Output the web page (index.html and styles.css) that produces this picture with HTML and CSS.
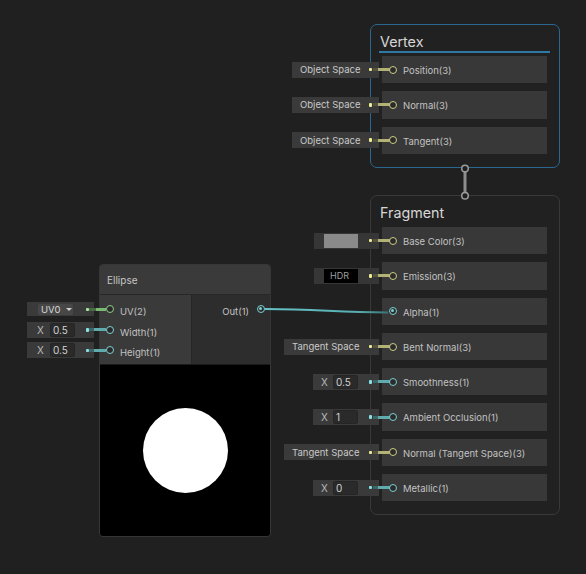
FILE: index.html
```html
<!DOCTYPE html>
<html>
<head>
<meta charset="utf-8">
<link rel="stylesheet" href="styles.css">
</head>
<body>
<div class="canvas">

  <section class="stack vertex">
    <div class="stack-title">Vertex</div>
    <div class="stack-bar"></div>
    <div class="slots">
      <div class="slot v3">
        <div class="field f-space"><span>Object Space</span><i class="dot"></i></div>
        <i class="wire"></i><i class="port"></i>
        <div class="slot-label">Position(3)</div>
      </div>
      <div class="slot v3">
        <div class="field f-space"><span>Object Space</span><i class="dot"></i></div>
        <i class="wire"></i><i class="port"></i>
        <div class="slot-label">Normal(3)</div>
      </div>
      <div class="slot v3">
        <div class="field f-space"><span>Object Space</span><i class="dot"></i></div>
        <i class="wire"></i><i class="port"></i>
        <div class="slot-label">Tangent(3)</div>
      </div>
    </div>
  </section>

  <section class="stack fragment">
    <div class="stack-title">Fragment</div>
    <div class="stack-bar"></div>
    <div class="slots">
      <div class="slot v3">
        <div class="field f-color"><span class="swatch grey"></span><i class="dot"></i></div>
        <i class="wire"></i><i class="port"></i>
        <div class="slot-label">Base Color(3)</div>
      </div>
      <div class="slot v3">
        <div class="field f-color"><span class="swatch hdr">HDR</span><i class="dot"></i></div>
        <i class="wire"></i><i class="port"></i>
        <div class="slot-label">Emission(3)</div>
      </div>
      <div class="slot v1">
        <i class="port connected"></i>
        <div class="slot-label">Alpha(1)</div>
      </div>
      <div class="slot v3">
        <div class="field f-tspace"><span>Tangent Space</span><i class="dot"></i></div>
        <i class="wire"></i><i class="port"></i>
        <div class="slot-label">Bent Normal(3)</div>
      </div>
      <div class="slot v1">
        <div class="field f-num"><span class="axis">X</span><span class="num">0.5</span><i class="dot"></i></div>
        <i class="wire"></i><i class="port"></i>
        <div class="slot-label">Smoothness(1)</div>
      </div>
      <div class="slot v1">
        <div class="field f-num"><span class="axis">X</span><span class="num">1</span><i class="dot"></i></div>
        <i class="wire"></i><i class="port"></i>
        <div class="slot-label">Ambient Occlusion(1)</div>
      </div>
      <div class="slot v3">
        <div class="field f-tspace"><span>Tangent Space</span><i class="dot"></i></div>
        <i class="wire"></i><i class="port"></i>
        <div class="slot-label">Normal (Tangent Space)(3)</div>
      </div>
      <div class="slot v1">
        <div class="field f-num"><span class="axis">X</span><span class="num">0</span><i class="dot"></i></div>
        <i class="wire"></i><i class="port"></i>
        <div class="slot-label">Metallic(1)</div>
      </div>
    </div>
  </section>

  <section class="node">
    <div class="node-title">Ellipse</div>
    <div class="node-body">
      <div class="node-inputs">
        <div class="nport v2">
          <div class="nfield f-uv"><span class="dropdown">UV0<b class="caret"></b></span><i class="dot"></i></div>
          <i class="wire"></i><i class="port"></i>
          <span class="nlabel">UV(2)</span>
        </div>
        <div class="nport v1">
          <div class="nfield f-nnum"><span class="axis">X</span><span class="num">0.5</span><i class="dot"></i></div>
          <i class="wire"></i><i class="port"></i>
          <span class="nlabel">Width(1)</span>
        </div>
        <div class="nport v1">
          <div class="nfield f-nnum"><span class="axis">X</span><span class="num">0.5</span><i class="dot"></i></div>
          <i class="wire"></i><i class="port"></i>
          <span class="nlabel">Height(1)</span>
        </div>
      </div>
      <div class="node-outputs">
        <div class="oport v1">
          <span class="nlabel">Out(1)</span>
          <i class="port connected"></i>
        </div>
      </div>
    </div>
    <div class="preview"><div class="disc"></div></div>
  </section>

  <svg class="edges" width="586" height="574" viewBox="0 0 586 574">
    <defs>
      <linearGradient id="edgeGrad" x1="0" y1="0" x2="1" y2="0">
        <stop offset="0" stop-color="#66c3c7"/>
        <stop offset="0.75" stop-color="#57aeb2"/>
        <stop offset="1" stop-color="#3c7376"/>
      </linearGradient>
    </defs>
    <path d="M265 309 C 320 309, 335 312.5, 388 312.5" fill="none" stroke="url(#edgeGrad)" stroke-width="2"/>
    <line x1="465" y1="172" x2="465" y2="192" stroke="#8d8d8d" stroke-width="3"/>
    <circle cx="465" cy="168.5" r="3.3" fill="#202020" stroke="#9c9c9c" stroke-width="1.5"/>
    <circle cx="465" cy="195.8" r="3.3" fill="#202020" stroke="#9c9c9c" stroke-width="1.5"/>
  </svg>
</div>
</body>
</html>
```
FILE: styles.css
```css
* { box-sizing: border-box; }
html, body { margin: 0; padding: 0; }
body {
  width: 586px;
  height: 574px;
  overflow: hidden;
  background: #202020;
  font-family: Inter, "Noto Sans", "Liberation Sans", sans-serif;
}
i { display: block; font-style: normal; }

.canvas { position: relative; width: 586px; height: 574px; }
.edges { position: absolute; left: 0; top: 0; z-index: 5; pointer-events: none; }

/* ---- master stacks ---- */
.stack {
  position: absolute;
  left: 370px;
  width: 190px;
  border: 1px solid #393939;
  border-radius: 7px;
  background: #212121;
  padding-top: 8px;
  display: flex;
  flex-direction: column;
}
.vertex { top: 24px; height: 144px; border-color: #2a6890; }
.fragment { top: 195px; height: 320px; }

.stack-title {
  font-size: 14.3px;
  line-height: 18px;
  color: #d6d6d6;
  margin-left: 9px;
}
.stack-bar { height: 2px; width: 171px; margin-left: 8px; }
.vertex .stack-bar { background: #2e79a6; }

.slots {
  display: flex;
  flex-direction: column;
  gap: 8px;
  margin: 3px 0 0 11px;
  width: 165px;
}
.slot { position: relative; height: 27.3px; background: #383838; flex: none; }
.slot-label {
  font-size: 9.5px;
  line-height: 24px;
  padding: 3px 0 0 21px;
  color: #c2c2c2;
  white-space: nowrap;
}

/* ---- ports / wires ---- */
.port {
  position: absolute;
  left: 6.5px;
  top: 50%;
  width: 8px;
  height: 8px;
  margin-top: -4px;
  border-radius: 50%;
  border: 1.5px solid;
  background: #2b2b2b;
  z-index: 3;
}
.port.connected::after {
  content: "";
  position: absolute;
  left: 1px; top: 1px;
  width: 3px; height: 3px;
  border-radius: 50%;
  background: currentColor;
}
.wire {
  position: absolute;
  left: -9px;
  width: 17px;
  top: 50%;
  height: 3px;
  margin-top: -1.5px;
  z-index: 2;
}
.dot { width: 3.5px; height: 3.5px; border-radius: 1px; margin-left: auto; margin-right: 7px; flex: none; }

.v3 .port { border-color: #cdcd88; color: #cdcd88; }
.v3 .dot { background: #ecec9a; }
.v3 .wire { background: linear-gradient(to right, #55553f 0 5px, #b2b276 5px); }
.v1 .port { border-color: #7ccfd3; color: #7ccfd3; }
.v1 .dot { background: #8ae0e4; }
.v1 .wire { background: linear-gradient(to right, #3d6667 0 5px, #5fabae 5px); }
.v2 .port { border-color: #8dcb86; color: #8dcb86; }
.v2 .dot { background: #a2ea99; }
.v2 .wire { background: linear-gradient(to right, #4a6a47 0 7px, #7ab974 7px); }

/* ---- inline input fields ---- */
.field {
  position: absolute;
  right: calc(100% + 3px);
  top: 50%;
  height: 16px;
  margin-top: -8px;
  background: #3a3a3a;
  display: flex;
  align-items: center;
  padding-left: 8px;
  font-size: 9.5px;
  color: #c9c9c9;
  white-space: nowrap;
  z-index: 1;
}
.f-space { width: 87px; }
.f-tspace { width: 95px; }
.f-color { width: 65px; padding-left: 10px; background: #363636; }
.f-num { width: 66px; font-size: 10px; }

.swatch {
  width: 34px;
  height: 14px;
  flex: none;
}
.swatch.grey { background: #8a8a8a; }
.swatch.hdr {
  background: #000;
  color: #9e9e9e;
  font-size: 9px;
  line-height: 14px;
  padding-left: 6px;
}
.axis { color: #b9b9b9; width: 11px; flex: none; }
.num {
  width: 25px;
  height: 14px;
  margin-left: 1px;
  flex: none;
  background: #2a2a2a;
  border: 1px solid #252525;
  border-radius: 2px;
  padding-left: 2px;
  line-height: 12px;
  color: #d2d2d2;
}

/* ---- Ellipse node ---- */
.node {
  position: absolute;
  left: 99px;
  top: 264px;
  width: 172px;
  height: 273px;
  border: 1px solid #363636;
  border-radius: 4px;
  background: #2e2e2e;
  display: flex;
  flex-direction: column;
}
.node-title {
  height: 30px;
  flex: none;
  background: #3a3a3a;
  border-radius: 3px 3px 0 0;
  border-bottom: 1px solid #272727;
  padding-left: 7px;
  font-size: 10px;
  line-height: 30px;
  color: #c6c6c6;
}
.node-body { display: flex; height: 69px; flex: none; }
.node-inputs { width: 91px; background: #3a3a3a; padding-top: 4px; }
.node-outputs { flex: 1; background: #2d2d2d; padding-top: 4px; border-left: 1px solid #262626; }
.nport { position: relative; height: 20.5px; }
.oport { position: relative; height: 20.5px; text-align: right; padding-right: 21px; }
.nlabel {
  font-size: 9.5px;
  line-height: 21px;
  color: #c2c2c2;
  padding-left: 20px;
  white-space: nowrap;
}
.oport .nlabel { padding-left: 0; }
.nport .port { left: 5.5px; }
.oport .port { left: auto; right: 5.5px; }
.nport .wire { left: -11px; width: 17px; }

.nfield {
  position: absolute;
  right: calc(100% + 6px);
  top: 50%;
  height: 16px;
  margin-top: -8px;
  width: 67px;
  background: #3a3a3a;
  display: flex;
  align-items: center;
  padding-left: 10px;
  font-size: 10px;
  color: #c9c9c9;
  z-index: 1;
}
.nfield .dot { margin-right: 5px; }
.f-uv { height: 14px; margin-top: -7px; padding-left: 11px; }
.f-nnum .axis { width: 12px; }
.dropdown {
  width: 35px;
  height: 11px;
  background: #474747;
  border-radius: 2px;
  display: flex;
  align-items: center;
  padding-left: 3px;
  font-size: 9.5px;
  line-height: 11px;
  color: #d8d8d8;
}
.caret {
  width: 0; height: 0;
  margin-left: 5px;
  border-left: 3px solid transparent;
  border-right: 3px solid transparent;
  border-top: 3px solid #cfcfcf;
}

.preview {
  flex: 1;
  background: #000;
  border-top: 1px solid #1a1a1a;
  border-radius: 0 0 3px 3px;
  display: flex;
  align-items: center;
  justify-content: center;
}
.disc { width: 85px; height: 85px; border-radius: 50%; background: #fff; }
```
